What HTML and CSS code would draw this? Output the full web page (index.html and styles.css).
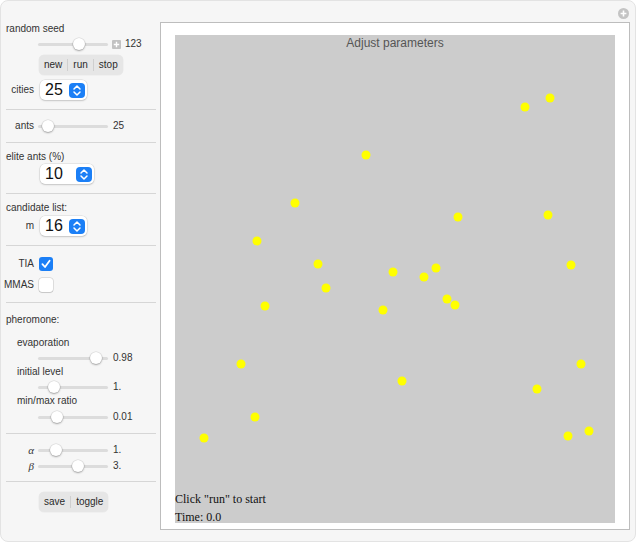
FILE: index.html
```html
<!DOCTYPE html>
<html>
<head>
<meta charset="utf-8">
<link rel="stylesheet" href="styles.css">
</head>
<body>
<div class="frame">
  <span class="corner-plus"><svg width="11" height="11" viewBox="0 0 11 11"><circle cx="5.5" cy="5.5" r="5.5" fill="#c4c4c4"/><path d="M5.5 2.6v5.8M2.6 5.5h5.8" stroke="#fff" stroke-width="1.6"/></svg></span>
  <aside class="side">
    <div class="label r-seed">random seed</div>
    <div class="row r-seedslider">
      <span></span>
      <div class="ctl">
        <div class="slider"><span class="thumb" style="left:41px"></span></div>
        <span class="plus-sq"><svg width="9" height="9" viewBox="0 0 9 9"><rect width="9" height="9" rx="1" fill="#c2c2c2"/><path d="M4.5 1.8v5.4M1.8 4.5h5.4" stroke="#fff" stroke-width="1.4"/></svg></span>
        <span class="val">123</span>
      </div>
    </div>
    <div class="row r-btns">
      <span></span>
      <div class="btngroup"><span>new</span><span>run</span><span>stop</span></div>
    </div>
    <div class="row r-cities">
      <span class="rlabel">cities</span>
      <div class="popup w47">25<span class="stepper"><svg width="16" height="15" viewBox="0 0 16 15"><rect width="16" height="15" rx="4" fill="#1b7ff6"/><path d="M5 6l3-3 3 3M5 9l3 3 3-3" fill="none" stroke="#fff" stroke-width="1.5" stroke-linecap="round" stroke-linejoin="round"/></svg></span></div>
    </div>
    <hr class="sep s1">
    <div class="row r-ants">
      <span class="rlabel">ants</span>
      <div class="ctl">
        <div class="slider"><span class="thumb" style="left:10px"></span></div>
        <span class="val">25</span>
      </div>
    </div>
    <hr class="sep s2">
    <div class="label r-elite">elite ants (%)</div>
    <div class="row r-elitepop">
      <span></span>
      <div class="popup w54">10<span class="stepper"><svg width="16" height="15" viewBox="0 0 16 15"><rect width="16" height="15" rx="4" fill="#1b7ff6"/><path d="M5 6l3-3 3 3M5 9l3 3 3-3" fill="none" stroke="#fff" stroke-width="1.5" stroke-linecap="round" stroke-linejoin="round"/></svg></span></div>
    </div>
    <hr class="sep s3">
    <div class="label r-cand">candidate list:</div>
    <div class="row r-m">
      <span class="rlabel">m</span>
      <div class="popup w47">16<span class="stepper"><svg width="16" height="15" viewBox="0 0 16 15"><rect width="16" height="15" rx="4" fill="#1b7ff6"/><path d="M5 6l3-3 3 3M5 9l3 3 3-3" fill="none" stroke="#fff" stroke-width="1.5" stroke-linecap="round" stroke-linejoin="round"/></svg></span></div>
    </div>
    <hr class="sep s4">
    <div class="row r-tia">
      <span class="rlabel">TIA</span>
      <span class="check on"><svg width="14" height="14" viewBox="0 0 14 14"><rect width="14" height="14" rx="3" fill="#1b7ff6"/><path d="M3.4 7.2l2.6 2.8 4.6-6.2" fill="none" stroke="#fff" stroke-width="1.8" stroke-linecap="round" stroke-linejoin="round"/></svg></span>
    </div>
    <div class="row r-mmas">
      <span class="rlabel">MMAS</span>
      <span class="check off"></span>
    </div>
    <hr class="sep s5">
    <div class="label r-pher">pheromone:</div>
    <div class="label sub r-evap">evaporation</div>
    <div class="row r-s1">
      <span></span>
      <div class="ctl"><div class="slider"><span class="thumb" style="left:58px"></span></div><span class="val">0.98</span></div>
    </div>
    <div class="label sub r-init">initial level</div>
    <div class="row r-s2">
      <span></span>
      <div class="ctl"><div class="slider"><span class="thumb" style="left:16px"></span></div><span class="val">1.</span></div>
    </div>
    <div class="label sub r-minmax">min/max ratio</div>
    <div class="row r-s3">
      <span></span>
      <div class="ctl"><div class="slider"><span class="thumb" style="left:19px"></span></div><span class="val">0.01</span></div>
    </div>
    <hr class="sep s6">
    <div class="row r-alpha">
      <span class="rlabel greek">α</span>
      <div class="ctl"><div class="slider"><span class="thumb" style="left:18px"></span></div><span class="val">1.</span></div>
    </div>
    <div class="row r-beta">
      <span class="rlabel greek">β</span>
      <div class="ctl"><div class="slider"><span class="thumb" style="left:40px"></span></div><span class="val">3.</span></div>
    </div>
    <hr class="sep s7">
    <div class="row r-save">
      <span></span>
      <div class="btngroup"><span>save</span><span>toggle</span></div>
    </div>
  </aside>
  <main class="panel">
    <div class="plot">
      <svg class="dots" width="440" height="488" viewBox="0 0 440 488">
        <g fill="#ffff00">
          <circle cx="350" cy="72" r="4.5"/>
          <circle cx="375" cy="63" r="4.5"/>
          <circle cx="191" cy="120" r="4.5"/>
          <circle cx="120" cy="168" r="4.5"/>
          <circle cx="283" cy="182" r="4.5"/>
          <circle cx="373" cy="180" r="4.5"/>
          <circle cx="82" cy="206" r="4.5"/>
          <circle cx="143" cy="229" r="4.5"/>
          <circle cx="218" cy="237" r="4.5"/>
          <circle cx="249" cy="242" r="4.5"/>
          <circle cx="261" cy="233" r="4.5"/>
          <circle cx="396" cy="230" r="4.5"/>
          <circle cx="151" cy="253" r="4.5"/>
          <circle cx="272" cy="264" r="4.5"/>
          <circle cx="280" cy="270" r="4.5"/>
          <circle cx="90" cy="271" r="4.5"/>
          <circle cx="208" cy="275" r="4.5"/>
          <circle cx="66" cy="329" r="4.5"/>
          <circle cx="406" cy="329" r="4.5"/>
          <circle cx="227" cy="346" r="4.5"/>
          <circle cx="362" cy="354" r="4.5"/>
          <circle cx="80" cy="382" r="4.5"/>
          <circle cx="29" cy="403" r="4.5"/>
          <circle cx="393" cy="401" r="4.5"/>
          <circle cx="414" cy="396" r="4.5"/>
        </g>
      </svg>
      <div class="plot-title">Adjust parameters</div>
      <div class="plot-status">
        <div>Click "run" to start</div>
        <div>Time: 0.0</div>
      </div>
    </div>
  </main>
</div>
</body>
</html>
```

FILE: styles.css
```css
html, body {
  margin: 0;
  padding: 0;
  background: #ffffff;
}

body {
  font-family: "Liberation Sans", Arial, Helvetica, sans-serif;
  color: #333333;
  font-size: 10px;
}

.frame {
  position: relative;
  box-sizing: border-box;
  width: 636px;
  height: 542px;
  border: 1px solid #e3e3e3;
  border-radius: 8px;
  background: #f6f6f6;
  display: flex;
  align-items: flex-start;
}

.corner-plus {
  position: absolute;
  top: 7px;
  right: 6px;
  width: 11px;
  height: 11px;
  line-height: 0;
}

/* ---------- sidebar ---------- */
.side {
  box-sizing: border-box;
  width: 159px;
  padding: 21px 3px 0 5px;
  display: flex;
  flex-direction: column;
}

.label {
  height: 14px;
  line-height: 14px;
  white-space: nowrap;
}

.label.sub {
  padding-left: 11px;
}

.row {
  display: grid;
  grid-template-columns: 28px auto;
  column-gap: 4px;
  align-items: center;
  justify-items: start;
}

.rlabel {
  justify-self: end;
  line-height: 14px;
  white-space: nowrap;
}

.greek {
  font-family: "Liberation Serif", "DejaVu Serif", serif;
  font-style: italic;
  font-size: 11px;
}

.ctl {
  display: flex;
  align-items: center;
  height: 14px;
}

.slider {
  position: relative;
  width: 70px;
  height: 3px;
  border-radius: 2px;
  background: #dcdcdc;
}

.thumb {
  position: absolute;
  top: 50%;
  width: 12px;
  height: 12px;
  margin: -6px 0 0 -6px;
  border-radius: 50%;
  background: #ffffff;
  box-shadow: 0 0 0 0.5px rgba(0,0,0,0.12), 0 1px 2px rgba(0,0,0,0.3);
}

.val {
  margin-left: 5px;
  white-space: nowrap;
  line-height: 14px;
}

.plus-sq {
  margin-left: 4px;
  line-height: 0;
}

.plus-sq + .val {
  margin-left: 4px;
}

.btngroup {
  display: flex;
  height: 20px;
  margin-left: 1px;
  border-radius: 5px;
  background: #e6e6e6;
  box-shadow: 0 0 0 0.5px rgba(0,0,0,0.05);
  align-items: center;
}

.btngroup span {
  padding: 0 5px;
  line-height: 12px;
  color: #2a2a2a;
}

.btngroup span + span {
  border-left: 1px solid #cfcfcf;
}

.popup {
  box-sizing: border-box;
  position: relative;
  height: 20px;
  margin-left: 2px;
  padding-left: 5px;
  border-radius: 5px;
  background: #ffffff;
  box-shadow: 0 0 0 0.5px rgba(0,0,0,0.12), 0 1px 2px rgba(0,0,0,0.15);
  font-size: 16px;
  line-height: 20px;
  color: #111;
  display: flex;
  align-items: center;
}

.popup.w47 { width: 47px; }
.popup.w54 { width: 54px; }

.stepper {
  margin-left: auto;
  margin-right: 2px;
  line-height: 0;
}

.check {
  width: 14px;
  height: 14px;
  margin-left: 1px;
  line-height: 0;
}

.check.off {
  box-sizing: border-box;
  border-radius: 3px;
  background: #ffffff;
  box-shadow: 0 0 0 0.5px rgba(0,0,0,0.2), 0 1px 1px rgba(0,0,0,0.1);
}

.sep {
  margin: 0;
  border: none;
  height: 1px;
  background: #d6d6d6;
  width: 150px;
}

.r-seedslider { margin-top: 1px; }
.r-btns { margin-top: 4px; }
.r-cities { margin-top: 5px; }
.s1 { margin-top: 9px; }
.r-ants { margin-top: 9px; }
.s2 { margin-top: 9px; }
.r-elite { margin-top: 7px; }
.r-elitepop { margin-top: 0; }
.s3 { margin-top: 9px; }
.r-cand { margin-top: 7px; }
.r-m { margin-top: 1px; }
.s4 { margin-top: 9px; }
.r-tia { margin-top: 11px; }
.r-mmas { margin-top: 7px; }
.s5 { margin-top: 10px; }
.r-pher { margin-top: 10px; }
.r-evap { margin-top: 9px; }
.r-s1 { margin-top: 1px; }
.r-init { margin-top: 0; }
.r-s2 { margin-top: 1px; }
.r-minmax { margin-top: 0; }
.r-s3 { margin-top: 2px; }
.s6 { margin-top: 9px; }
.r-alpha { margin-top: 9px; }
.r-beta { margin-top: 2px; }
.s7 { margin-top: 8px; }
.r-save { margin-top: 10px; }

/* ---------- main panel ---------- */
.panel {
  box-sizing: border-box;
  margin-top: 21px;
  width: 470px;
  height: 508px;
  padding: 12px 14px 0 14px;
  background: #ffffff;
  border: 1px solid #bdbdbd;
}

.plot {
  position: relative;
  width: 440px;
  height: 488px;
  background: #cccccc;
  display: flex;
  flex-direction: column;
  justify-content: space-between;
}

.dots {
  position: absolute;
  left: 0;
  top: 0;
}

.plot-title {
  position: relative;
  text-align: center;
  font-size: 12px;
  line-height: 16px;
  color: #555555;
}

.plot-status {
  position: relative;
  margin-bottom: -3px;
  font-family: "Liberation Serif", "Times New Roman", serif;
  font-size: 12px;
  line-height: 18px;
  color: #111111;
}
```
